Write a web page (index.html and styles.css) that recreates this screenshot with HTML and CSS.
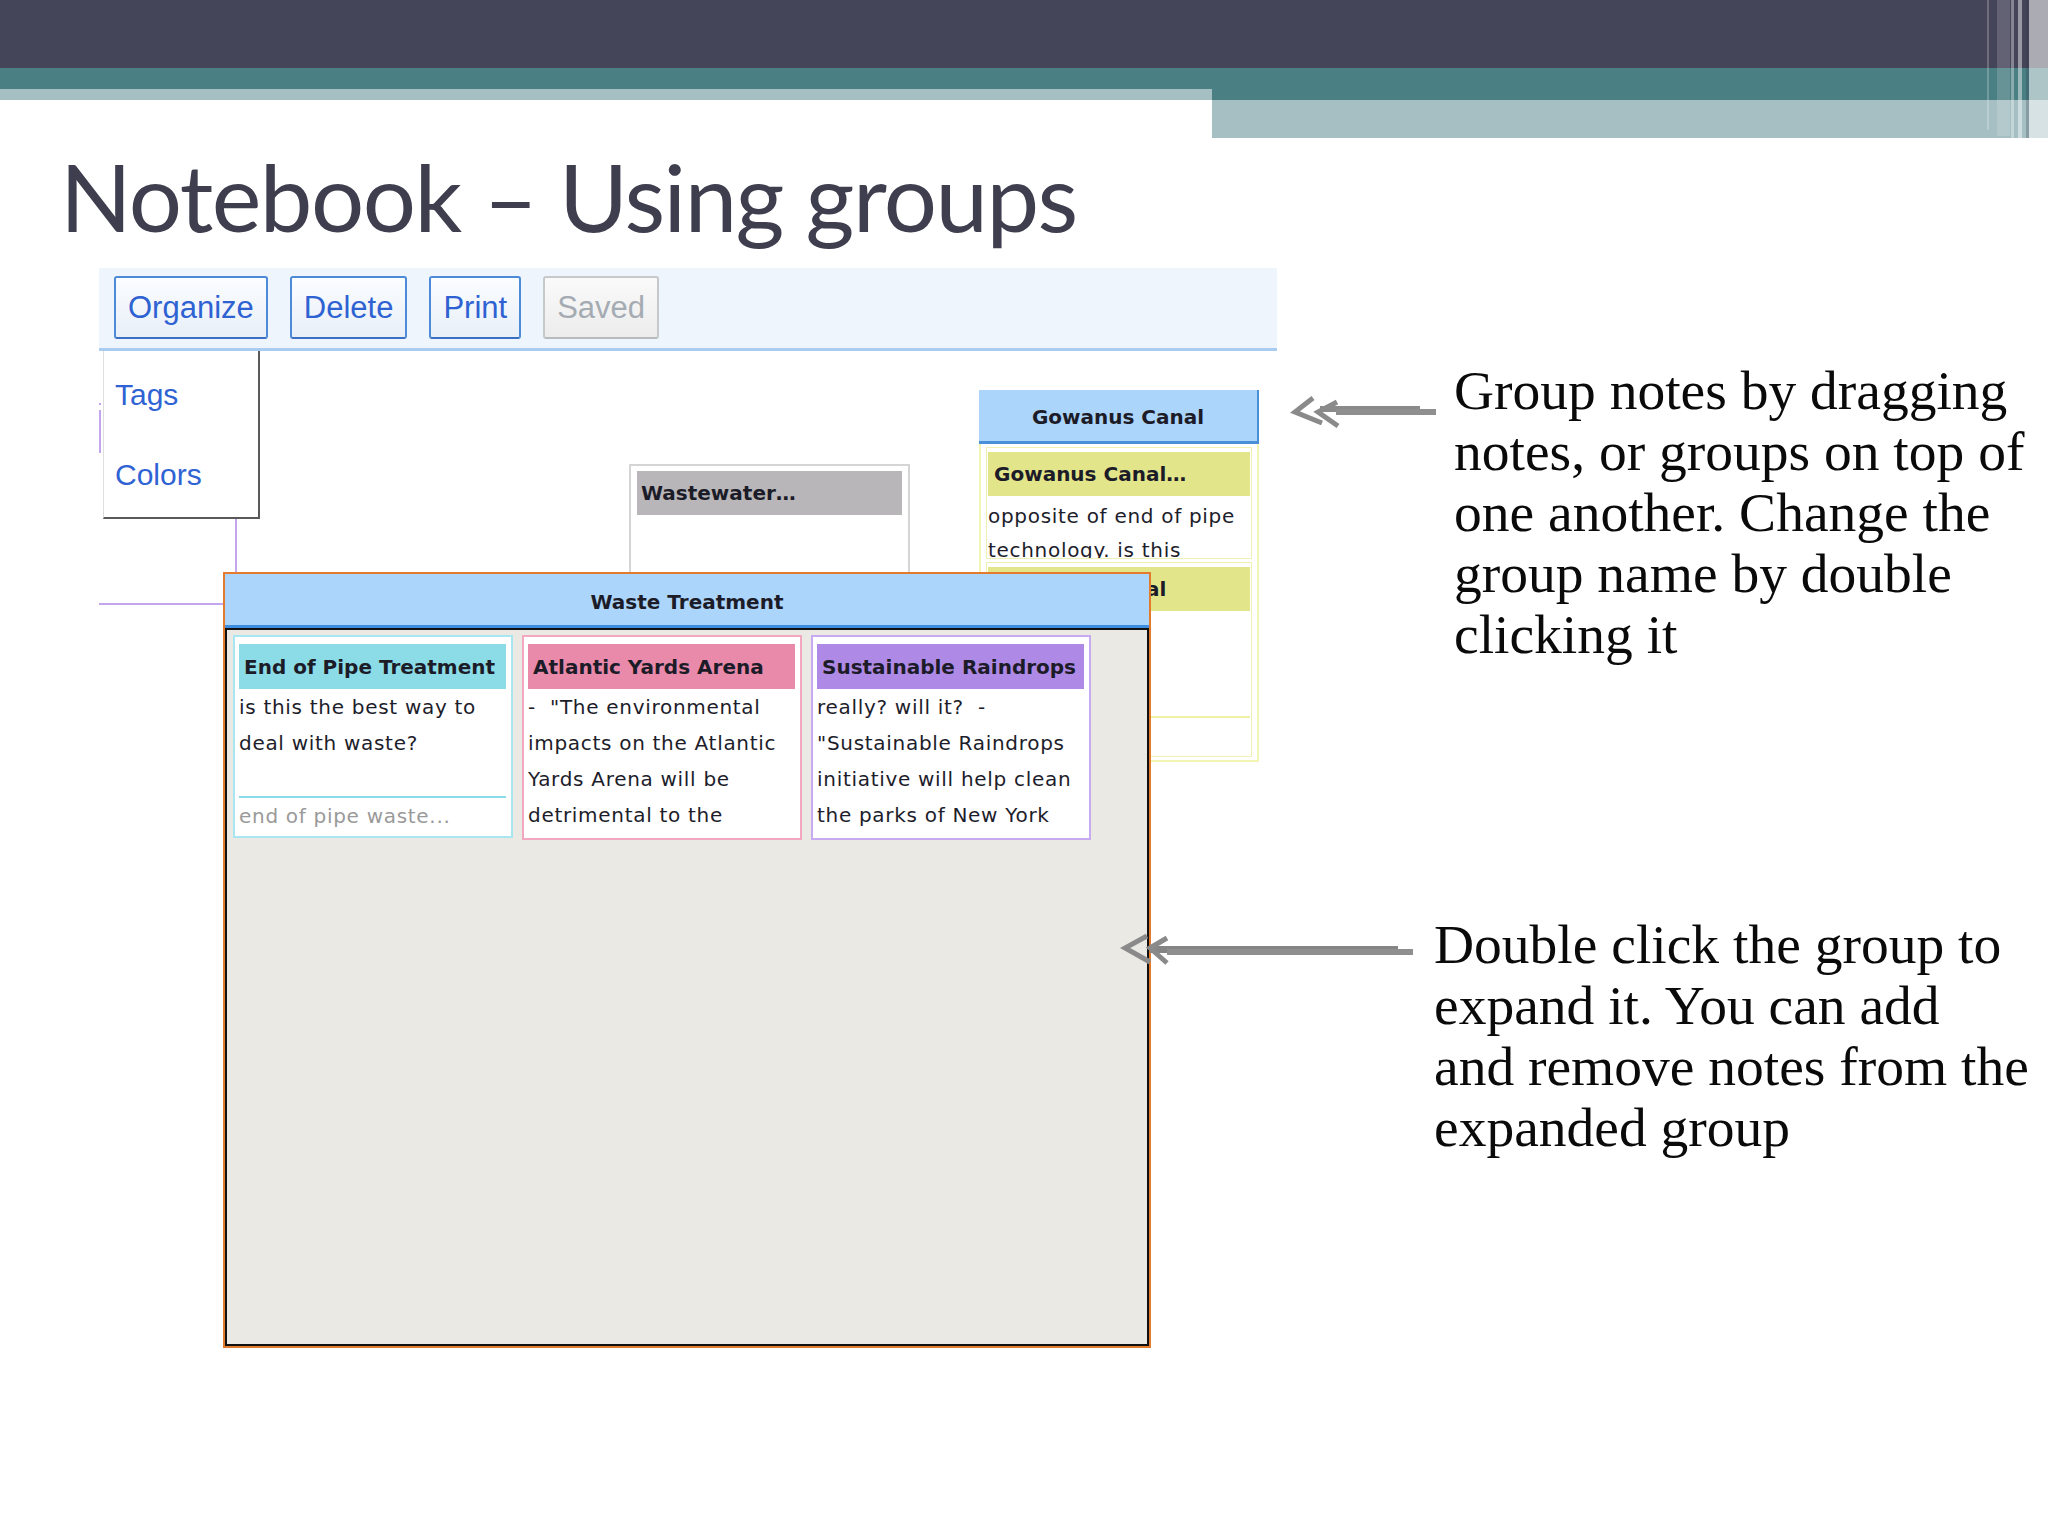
FILE: index.html
```html
<!DOCTYPE html>
<html lang="en">
<head>
<meta charset="utf-8">
<title>Notebook – Using groups</title>
<link rel="stylesheet" href="styles.css">
</head>
<body>
<header class="topbar">
  <div class="dark"></div>
  <div class="bands">
    <div class="band band-left"><div class="teal teal-left"></div><div class="pale pale-left"></div></div>
    <div class="band band-right"><div class="teal teal-right"></div><div class="pale pale-right"></div></div>
  </div>
  <div class="stripes">
    <span class="stripe s1"></span>
    <span class="stripe s2"></span>
    <span class="stripe s3"></span>
    <span class="stripe s4"></span>
    <span class="stripe s5"></span>
    <span class="stripe s6"></span>
  </div>
</header>

<h1 class="title">Notebook – Using groups</h1>

<main class="main">
  <section class="app">
    <div class="toolbar">
      <button class="btn">Organize</button>
      <button class="btn">Delete</button>
      <button class="btn">Print</button>
      <button class="btn btn-disabled">Saved</button>
    </div>
    <div class="canvas">
      <span class="link link-dot"></span>
      <span class="link link-v1"></span>
      <span class="link link-v2"></span>
      <span class="link link-h1"></span>

      <div class="group-gray">
        <div class="gray-head">Wastewater…</div>
      </div>

      <div class="group-gowanus">
        <div class="group-head">Gowanus Canal</div>
        <div class="gowanus-body">
          <div class="ynote ynote-first">
            <div class="ynote-head">Gowanus Canal…</div>
            <div class="ynote-text">opposite of end of pipe<br>technology. is this</div>
          </div>
          <div class="ynote ynote-second">
            <div class="ynote-head">Gowanus Canal</div>
            <div class="ynote-empty"></div>
            <div class="ynote-tags"></div>
          </div>
        </div>
      </div>

      <div class="menu">
        <div class="menu-item">Tags</div>
        <div class="menu-item">Colors</div>
      </div>

      <div class="xgroup">
        <div class="xhead">Waste Treatment</div>
        <div class="xbody">
          <div class="note note-cyan">
            <div class="note-head">End of Pipe Treatment</div>
            <div class="note-text note-text-short">is this the best way to<br>deal with waste?</div>
            <div class="note-tags">end of pipe waste...</div>
          </div>
          <div class="note note-pink">
            <div class="note-head">Atlantic Yards Arena</div>
            <div class="note-text">-&nbsp; "The environmental<br>impacts on the Atlantic<br>Yards Arena will be<br>detrimental to the</div>
          </div>
          <div class="note note-purple">
            <div class="note-head">Sustainable Raindrops</div>
            <div class="note-text">really? will it?&nbsp; -<br>"Sustainable Raindrops<br>initiative will help clean<br>the parks of New York</div>
          </div>
        </div>
      </div>
    </div>
  </section>

  <aside class="notes">
    <p class="explain explain-first">Group notes by dragging<br>notes, or groups on top of<br>one another. Change the<br>group name by double<br>clicking it</p>
    <p class="explain explain-second">Double click the group to<br>expand it. You can add<br>and remove notes from the<br>expanded group</p>
  </aside>
</main>

<svg class="arrow arrow-one" width="150" height="36" viewBox="0 0 150 36" aria-hidden="true">
  <rect x="30" y="12" width="100" height="6" fill="#8a8a8a"/>
  <rect x="46" y="15" width="100" height="6" fill="#8f8f8f"/>
  <polyline points="23,4 5,18 32,29" fill="none" stroke="#8a8a8a" stroke-width="5"/>
  <polyline points="47,8 28,18 48,32" fill="none" stroke="#8a8a8a" stroke-width="5"/>
</svg>

<svg class="arrow arrow-two" width="298" height="38" viewBox="0 0 298 38" aria-hidden="true">
  <rect x="30" y="16" width="248" height="7" fill="#858585"/>
  <rect x="47" y="19" width="246" height="6" fill="#8f8f8f"/>
  <polyline points="27,6 5,18 30,32" fill="none" stroke="#8a8a8a" stroke-width="5"/>
  <polyline points="47,8 30,18 47,33" fill="none" stroke="#8a8a8a" stroke-width="5"/>
</svg>
</body>
</html>
```

FILE: styles.css
```css
* { box-sizing: border-box; }

html, body {
  margin: 0;
  padding: 0;
}

body {
  width: 2048px;
  height: 1536px;
  overflow: hidden;
  position: relative;
  background: #ffffff;
  font-family: "DejaVu Sans", Verdana, sans-serif;
}

/* ---------- top decorative bars ---------- */
.topbar {
  position: relative;
  height: 138px;
}

.dark {
  height: 68px;
  background: #45455a;
}

.bands {
  display: flex;
  align-items: flex-start;
}

.band-left { width: 1212px; }
.band-right { flex: 1; }

.teal { background: #4a7f83; }
.pale { background: #a5bfc3; }

.teal-left { height: 21px; }
.pale-left { height: 11px; }
.teal-right { height: 32px; }
.pale-right { height: 38px; }

.stripes {
  position: absolute;
  top: 0;
  left: 1985px;
  width: 63px;
  height: 138px;
  display: flex;
  align-items: flex-start;
}

.stripe { display: block; }
.s1 { margin-left: 2px; width: 2px; height: 130px; background: rgba(255,255,255,0.22); }
.s2 { margin-left: 8px; width: 13px; height: 136px; background: rgba(255,255,255,0.16); }
.s3 { margin-left: 1px; width: 3px; height: 138px; background: rgba(255,255,255,0.35); }
.s4 { margin-left: 4px; width: 4px; height: 138px; background: rgba(255,255,255,0.45); }
.s5 { margin-left: 4px; width: 3px; height: 138px; background: rgba(50,50,70,0.25); }
.s6 { margin-left: 0; flex: 1; height: 138px; background: rgba(255,255,255,0.55); }

/* ---------- title ---------- */
.title {
  margin: 11px 0 0 60px;
  font-family: Lato, "Open Sans", sans-serif;
  font-weight: 400;
  font-size: 94px;
  letter-spacing: -1.5px;
  line-height: 94px;
  height: 94px;
  color: #3e3e4f;
  white-space: nowrap;
}

/* ---------- main area ---------- */
.main {
  display: flex;
  align-items: flex-start;
  margin-top: 25px;
  padding-left: 99px;
}

.app {
  width: 1178px;
  flex: none;
}

.toolbar {
  height: 83px;
  display: flex;
  align-items: flex-start;
  gap: 22px;
  padding: 8px 0 0 15px;
  background: #eef5fd;
  border-bottom: 3px solid #a9cdf2;
}

.btn {
  height: 63px;
  padding: 0 12px;
  margin: 0;
  border: 2px solid #4d8ad8;
  border-bottom-color: #3a70c2;
  border-radius: 3px;
  background: linear-gradient(#fbfdff, #e8eff8);
  color: #2e62d2;
  font-family: "Liberation Sans", Arial, sans-serif;
  font-size: 31px;
  line-height: 59px;
}

.btn-disabled {
  border-color: #c6c9cc;
  border-bottom-color: #b8bbbe;
  background: linear-gradient(#fafafa, #ececec);
  color: #a5abb2;
}

/* ---------- canvas ---------- */
.canvas {
  position: relative;
  height: 1000px;
}

.link {
  position: absolute;
  display: block;
  background: #c4a6ee;
}
.link-dot { left: 0; top: 52px; width: 2px; height: 2px; }
.link-v1 { left: 0; top: 59px; width: 2px; height: 43px; }
.link-v2 { left: 136px; top: 168px; width: 2px; height: 54px; }
.link-h1 { left: 0; top: 252px; width: 124px; height: 2px; }

.menu {
  position: absolute;
  left: 4px;
  top: 0;
  width: 157px;
  height: 168px;
  padding-top: 4px;
  background: #ffffff;
  border-left: 1px solid #dedede;
  border-right: 2px solid #595959;
  border-bottom: 2px solid #595959;
}

.menu-item {
  height: 80px;
  display: flex;
  align-items: center;
  padding-left: 11px;
  font-family: "Liberation Sans", Arial, sans-serif;
  font-size: 30px;
  color: #2f63d4;
}

/* collapsed gray group */
.group-gray {
  position: absolute;
  left: 530px;
  top: 113px;
  width: 281px;
  height: 130px;
  padding: 5px 6px;
  background: #ffffff;
  border: 2px solid #d5d5d5;
}

.gray-head {
  height: 44px;
  padding-left: 4px;
  display: flex;
  align-items: center;
  background: #b8b6b9;
  font-weight: bold;
  font-size: 20px;
  color: #1c1c28;
}

/* collapsed Gowanus group */
.group-gowanus {
  position: absolute;
  left: 880px;
  top: 39px;
  width: 280px;
  height: 372px;
  display: flex;
  flex-direction: column;
}

.group-head {
  height: 54px;
  flex: none;
  padding-top: 3px;
  display: flex;
  align-items: center;
  justify-content: center;
  background: #acd5fb;
  border-right: 2px solid #4a90d9;
  border-bottom: 3px solid #4a90d9;
  font-weight: bold;
  font-size: 20px;
  color: #1c1c28;
}

.gowanus-body {
  flex: 1;
  padding: 3px 5px 0;
  background: #ffffff;
  border: 2px solid #f3f5b5;
  border-top: none;
  overflow: hidden;
}

.ynote {
  border: 1px solid #eef0b4;
  padding: 4px 1px 0;
}

.ynote-second { margin-top: 3px; }

.ynote-head {
  height: 44px;
  padding-left: 6px;
  display: flex;
  align-items: center;
  background: #e3e58a;
  font-weight: bold;
  font-size: 20px;
  color: #1c1c28;
  white-space: nowrap;
  overflow: hidden;
}

.ynote-text {
  height: 62px;
  padding-top: 3px;
  overflow: hidden;
  font-size: 20px;
  letter-spacing: 0.7px;
  line-height: 34px;
  color: #1d1d2b;
  white-space: nowrap;
}

.ynote-empty { height: 105px; }

.ynote-tags {
  height: 40px;
  border-top: 2px solid #eef0a6;
}

/* expanded group */
.xgroup {
  position: absolute;
  left: 124px;
  top: 221px;
  width: 928px;
  height: 776px;
  display: flex;
  flex-direction: column;
  border: 2px solid #e27b2e;
}

.xhead {
  height: 54px;
  flex: none;
  padding-top: 5px;
  display: flex;
  align-items: center;
  justify-content: center;
  background: #acd5fb;
  border-bottom: 3px solid #3d8ee0;
  font-weight: bold;
  font-size: 20px;
  color: #1c1c28;
}

.xbody {
  flex: 1;
  display: flex;
  align-items: flex-start;
  gap: 9px;
  padding: 5px 6px;
  background: #ebe9e3;
  border: 2px solid #111111;
}

.note {
  width: 280px;
  flex: none;
  padding: 7px 5px 5px 4px;
  background: #ffffff;
  border: 2px solid #ccc;
}

.note-head {
  height: 45px;
  padding-left: 5px;
  display: flex;
  align-items: center;
  font-weight: bold;
  font-size: 20px;
  color: #1c1c28;
  white-space: nowrap;
  overflow: hidden;
}

.note-text {
  height: 144px;
  overflow: hidden;
  font-size: 20px;
  letter-spacing: 0.7px;
  line-height: 36px;
  color: #1d1d2b;
  white-space: nowrap;
}

.note-text-short { height: 107px; }

.note-tags {
  height: 38px;
  margin-bottom: -3px;
  border-top: 2px solid #8adde8;
  font-size: 20px;
  letter-spacing: 0.7px;
  line-height: 36px;
  color: #9a9a9a;
  white-space: nowrap;
}

.note-cyan { border-color: #a8e6f2; }
.note-cyan .note-head { background: #8cdce8; }
.note-pink { border-color: #f3a7c1; }
.note-pink .note-head { background: #e98aab; }
.note-purple { border-color: #c7aaf0; }
.note-purple .note-head { background: #ae8ae6; }

/* ---------- explanations ---------- */
.notes {
  margin-left: 157px;
  width: 614px;
  flex: none;
}

.explain {
  margin: 0;
  font-family: "Liberation Serif", "Times New Roman", serif;
  font-size: 55.5px;
  line-height: 61px;
  color: #0a0a0a;
  white-space: nowrap;
}

.explain-first {
  margin-top: 92px;
  padding-left: 20px;
}

.explain-second {
  margin-top: 249px;
}

/* ---------- annotation arrows ---------- */
.arrow {
  position: absolute;
  display: block;
}

.arrow-one { left: 1290px; top: 394px; }
.arrow-two { left: 1120px; top: 930px; }
```
